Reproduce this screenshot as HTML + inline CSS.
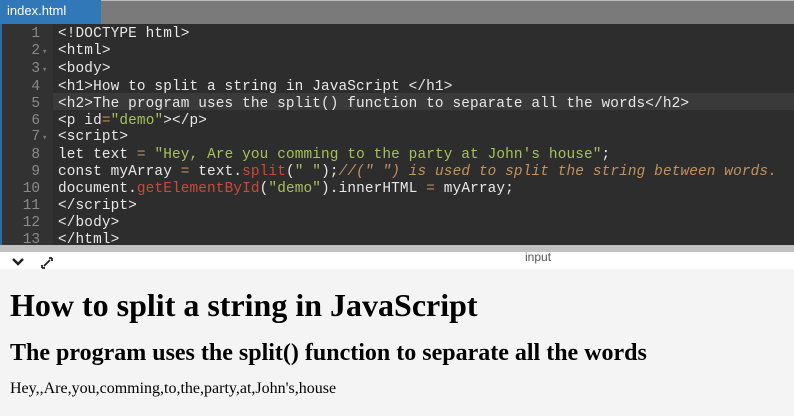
<!DOCTYPE html>
<html><head><style>
body{margin:0;width:794px;height:416px;overflow:hidden;background:#f4f4f4;position:relative;font-family:"Liberation Sans",sans-serif}
.tabbar{position:absolute;left:0;top:0;width:794px;height:24px;background:#7a7a7a;border-top:1px solid #bbb;box-sizing:border-box}
.tab{position:absolute;left:0;top:0;width:101px;height:24px;background:#3178b8;color:#fff;font-size:13px;line-height:22px;padding-left:7px;box-sizing:border-box}
.ed{position:absolute;left:0;top:24px;width:794px;height:221px;background:#2d2d2d}
.blue{position:absolute;left:0;top:24px;width:2px;height:228px;background:#2c6aa8}
.gut{position:absolute;left:2px;top:24px;width:51px;height:221px;background:#323232}
.hl{position:absolute;left:53px;top:93px;width:741px;height:17px;background:#3a3a3a}
.code{position:absolute;left:0;top:26px;font-family:"Liberation Mono",monospace;font-size:14.4px;letter-spacing:0.13px;line-height:16.9px;color:#e8e8e8;white-space:pre}
.ln{display:inline-block;width:40px;text-align:right;color:#8a8a8a;letter-spacing:0}
.fd{display:inline-block;width:18px;color:#777;font-size:9px;text-align:left;padding-left:2px;box-sizing:border-box}
.s{color:#a5c25c}.o{color:#b98e5a}.r{color:#cc4a3a}.c{color:#c3925e;font-style:italic}
.gray{position:absolute;left:0;top:245px;width:794px;height:7px;background:#c0c0c0}
.wb{position:absolute;left:0;top:252px;width:794px;height:17px;background:#fff}
.inp{position:absolute;left:525px;top:250px;font-size:12px;color:#555}
h1,h2,p{position:absolute;left:10px;margin:0;font-family:"Liberation Serif",serif;color:#000;white-space:nowrap}
h1{top:286px;font-size:32px;line-height:38px}
h2{top:339px;font-size:24px;line-height:28px}
p{top:379px;font-size:16px;line-height:20px}
</style></head><body>
<div class="tabbar"></div><div class="tab">index.html</div>
<div class="ed"></div><div class="gut"></div><div class="hl"></div><div class="blue"></div>
<div class="code"><span class="ln">1</span><span class="fd"></span>&lt;!DOCTYPE html&gt;
<span class="ln">2</span><span class="fd">▾</span>&lt;html&gt;
<span class="ln">3</span><span class="fd">▾</span>&lt;body&gt;
<span class="ln">4</span><span class="fd"></span>&lt;h1&gt;How to split a string in JavaScript &lt;/h1&gt;
<span class="ln">5</span><span class="fd"></span>&lt;h2&gt;The program uses the split() function to separate all the words&lt;/h2&gt;
<span class="ln">6</span><span class="fd"></span>&lt;p id<span class="o">=</span><span class="s">"demo"</span>&gt;&lt;/p&gt;
<span class="ln">7</span><span class="fd">▾</span>&lt;script&gt;
<span class="ln">8</span><span class="fd"></span>let text <span class="o">=</span> <span class="s">"Hey, Are you comming to the party at John's house"</span>;
<span class="ln">9</span><span class="fd"></span>const myArray <span class="o">=</span> text.<span class="r">split</span>(<span class="s">" "</span>);<span class="c">//(" ") is used to split the string between words.</span>
<span class="ln">10</span><span class="fd"></span>document.<span class="r">getElementById</span>(<span class="s">"demo"</span>).innerHTML <span class="o">=</span> myArray;
<span class="ln">11</span><span class="fd"></span>&lt;/script&gt;
<span class="ln">12</span><span class="fd"></span>&lt;/body&gt;
<span class="ln">13</span><span class="fd"></span>&lt;/html&gt;</div>
<div class="gray"></div><div class="wb"></div>
<svg style="position:absolute;left:10px;top:255px" width="50" height="14"><path d="M3 4l5 5 5-5" stroke="#222" stroke-width="2.5" fill="none"/><path d="M34 11l6-6M42 3h-3M42 3v3M32 13h3M32 13v-3" stroke="#222" stroke-width="1.8" fill="none"/></svg>
<div class="inp">input</div>
<h1>How to split a string in JavaScript</h1>
<h2>The program uses the split() function to separate all the words</h2>
<p>Hey,,Are,you,comming,to,the,party,at,John's,house</p>
</body></html>
